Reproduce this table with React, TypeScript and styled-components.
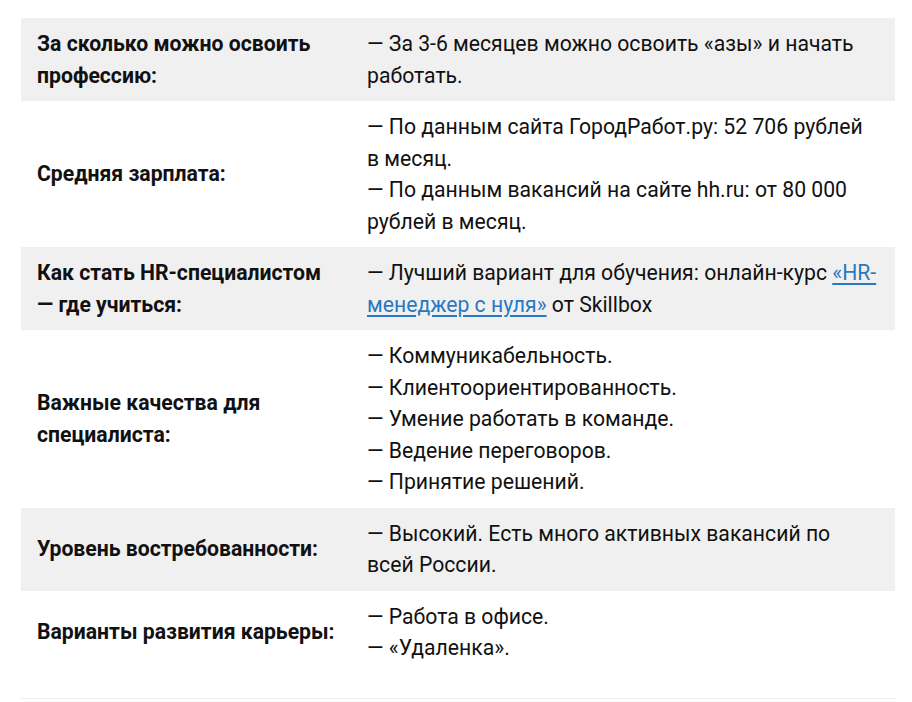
import React from "react";
import styled, { createGlobalStyle } from "styled-components";

const Global = createGlobalStyle`
  html, body { margin: 0; padding: 0; background: #fff; }
  body { font-family: Roboto, "Noto Sans", Arial, sans-serif; color: #111; }
`;

const Page = styled.div`
  padding: 18px 17px 0 21px;
`;

const Table = styled.table`
  width: 874px;
  border-collapse: collapse;
  border-spacing: 0;
  font-size: 21.2px;
  line-height: 31.5px;
`;

const Row = styled.tr<{ $shaded: boolean }>`
  background: ${(p) => (p.$shaded ? "#f0f0f0" : "#fff")};
`;

const Head = styled.td`
  width: 298px;
  padding: 10px 16px;
  font-weight: 700;
  vertical-align: middle;
  color: #111;
`;

const Cell = styled.td`
  padding: 10px 16px;
  vertical-align: middle;
  color: #111;
`;

const Line = styled.div`
  display: block;
`;

const Link = styled.a`
  color: #2a78c2;
  text-decoration: underline;
  text-decoration-thickness: 2px;
  text-underline-offset: 3px;
`;

const Rule = styled.div`
  width: 874px;
  margin-top: 24px;
  border-top: 1px solid #eeeeee;
`;

const rows: { head: React.ReactNode; body: React.ReactNode }[] = [
  {
    head: "За сколько можно освоить профессию:",
    body: "— За 3-6 месяцев можно освоить «азы» и начать работать.",
  },
  {
    head: "Средняя зарплата:",
    body: (
      <>
        <Line>— По данным сайта ГородРабот.ру: 52 706 рублей в месяц.</Line>
        <Line>— По данным вакансий на сайте hh.ru: от 80 000 рублей в месяц.</Line>
      </>
    ),
  },
  {
    head: "Как стать HR-специалистом — где учиться:",
    body: (
      <>
        — Лучший вариант для обучения: онлайн-курс{" "}
        <Link href="#">«HR-менеджер с нуля»</Link> от Skillbox
      </>
    ),
  },
  {
    head: "Важные качества для специалиста:",
    body: (
      <>
        <Line>— Коммуникабельность.</Line>
        <Line>— Клиентоориентированность.</Line>
        <Line>— Умение работать в команде.</Line>
        <Line>— Ведение переговоров.</Line>
        <Line>— Принятие решений.</Line>
      </>
    ),
  },
  {
    head: "Уровень востребованности:",
    body: "— Высокий. Есть много активных вакансий по всей России.",
  },
  {
    head: "Варианты развития карьеры:",
    body: (
      <>
        <Line>— Работа в офисе.</Line>
        <Line>— «Удаленка».</Line>
      </>
    ),
  },
];

export default function App() {
  return (
    <Page>
      <Global />
      <Table>
        <tbody>
          {rows.map((r, i) => (
            <Row key={i} $shaded={i % 2 === 0}>
              <Head>{r.head}</Head>
              <Cell>{r.body}</Cell>
            </Row>
          ))}
        </tbody>
      </Table>
      <Rule />
    </Page>
  );
}
